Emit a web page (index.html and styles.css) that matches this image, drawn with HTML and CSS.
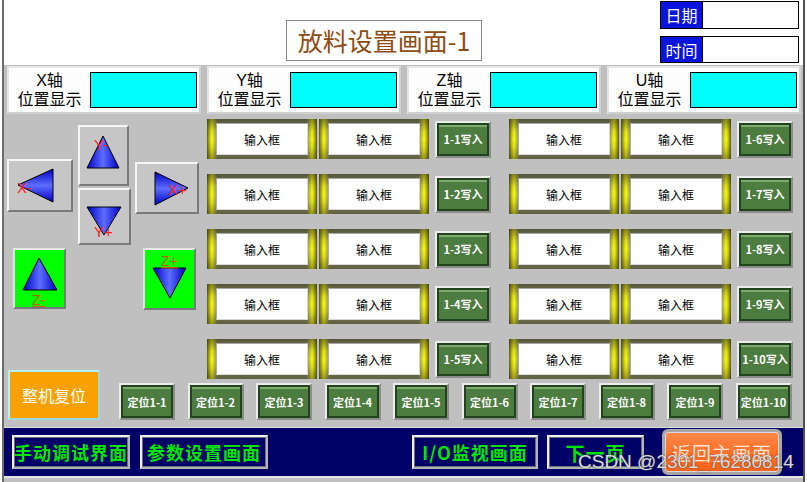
FILE: index.html
```html
<!DOCTYPE html>
<html lang="zh-CN">
<head>
<meta charset="utf-8">
<title>放料设置画面-1</title>
<link rel="stylesheet" href="styles.css">
</head>
<body>
<svg class="defs" aria-hidden="true">
  <defs>
    <linearGradient id="gv" x1="0" y1="0" x2="1" y2="0">
      <stop offset="0" stop-color="#0000c4"/>
      <stop offset="0.5" stop-color="#5d6dff"/>
      <stop offset="1" stop-color="#0000c4"/>
    </linearGradient>
    <linearGradient id="gh" x1="0" y1="0" x2="0" y2="1">
      <stop offset="0" stop-color="#0000c4"/>
      <stop offset="0.5" stop-color="#5d6dff"/>
      <stop offset="1" stop-color="#0000c4"/>
    </linearGradient>
  </defs>
</svg>
<div class="screen">
  <div class="frame">
    <header class="header">
      <div class="title">放料设置画面-1</div>
      <div class="clock">
        <div class="clock-row"><span class="clock-label">日期</span><span class="clock-field"></span></div>
        <div class="clock-row clock-row-2"><span class="clock-label">时间</span><span class="clock-field"></span></div>
      </div>
    </header>

    <section class="axes">
      <div class="axis"><div class="axis-label">X轴<br>位置显示</div><div class="axis-value"></div></div>
      <div class="axis"><div class="axis-label">Y轴<br>位置显示</div><div class="axis-value"></div></div>
      <div class="axis"><div class="axis-label">Z轴<br>位置显示</div><div class="axis-value"></div></div>
      <div class="axis"><div class="axis-label">U轴<br>位置显示</div><div class="axis-value"></div></div>
    </section>

    <main class="main">
      <div class="upper">
        <div class="jog">
          <div class="jbtn btn-ym">
            <svg width="47" height="57" viewBox="0 0 47 57">
              <polygon points="23,9 7,41 39,41" fill="url(#gv)" stroke="#000" stroke-width="1"/>
              <text x="14" y="23" class="jlabel">Y-</text>
            </svg>
          </div>
          <div class="jbtn btn-yp">
            <svg width="49" height="53" viewBox="0 0 49 53">
              <polygon points="7,17 41,17 24,45" fill="url(#gv)" stroke="#000" stroke-width="1"/>
              <text x="14" y="47" class="jlabel">Y+</text>
            </svg>
          </div>
          <div class="jbtn btn-xm">
            <svg width="62" height="49" viewBox="0 0 62 49">
              <polygon points="9,24 44,8 44,41" fill="url(#gh)" stroke="#000" stroke-width="1"/>
              <text x="8" y="32" class="jlabel">X-</text>
            </svg>
          </div>
          <div class="jbtn btn-xp">
            <svg width="60" height="48" viewBox="0 0 60 48">
              <polygon points="18,8 18,41 51,24" fill="url(#gh)" stroke="#000" stroke-width="1"/>
              <text x="31" y="31" class="jlabel">X+</text>
            </svg>
          </div>
          <div class="zbtn btn-zm">
            <svg width="49" height="57" viewBox="0 0 49 57">
              <polygon points="24,8 8,40 42,40" fill="url(#gv)" stroke="#000" stroke-width="1"/>
              <text x="17" y="55" class="zlabel">Z-</text>
            </svg>
          </div>
          <div class="zbtn btn-zp">
            <svg width="49" height="58" viewBox="0 0 49 58">
              <polygon points="8,18 41,18 25,48" fill="url(#gv)" stroke="#000" stroke-width="1"/>
              <text x="16" y="16" class="zlabel">Z+</text>
            </svg>
          </div>
        </div>

        <div class="inputs">
          <div class="row">
            <div class="group"><div class="field"><span>输入框</span></div><div class="field"><span>输入框</span></div><div class="gbtn write">1-1写入</div></div>
            <div class="group"><div class="field"><span>输入框</span></div><div class="field"><span>输入框</span></div><div class="gbtn write">1-6写入</div></div>
          </div>
          <div class="row">
            <div class="group"><div class="field"><span>输入框</span></div><div class="field"><span>输入框</span></div><div class="gbtn write">1-2写入</div></div>
            <div class="group"><div class="field"><span>输入框</span></div><div class="field"><span>输入框</span></div><div class="gbtn write">1-7写入</div></div>
          </div>
          <div class="row">
            <div class="group"><div class="field"><span>输入框</span></div><div class="field"><span>输入框</span></div><div class="gbtn write">1-3写入</div></div>
            <div class="group"><div class="field"><span>输入框</span></div><div class="field"><span>输入框</span></div><div class="gbtn write">1-8写入</div></div>
          </div>
          <div class="row">
            <div class="group"><div class="field"><span>输入框</span></div><div class="field"><span>输入框</span></div><div class="gbtn write">1-4写入</div></div>
            <div class="group"><div class="field"><span>输入框</span></div><div class="field"><span>输入框</span></div><div class="gbtn write">1-9写入</div></div>
          </div>
          <div class="row">
            <div class="group"><div class="field"><span>输入框</span></div><div class="field"><span>输入框</span></div><div class="gbtn write">1-5写入</div></div>
            <div class="group"><div class="field"><span>输入框</span></div><div class="field"><span>输入框</span></div><div class="gbtn write">1-10写入</div></div>
          </div>
        </div>
      </div>

      <div class="lower">
        <div class="reset">整机复位</div>
        <div class="positions">
          <div class="gbtn pos">定位1-1</div>
          <div class="gbtn pos">定位1-2</div>
          <div class="gbtn pos">定位1-3</div>
          <div class="gbtn pos">定位1-4</div>
          <div class="gbtn pos">定位1-5</div>
          <div class="gbtn pos">定位1-6</div>
          <div class="gbtn pos">定位1-7</div>
          <div class="gbtn pos">定位1-8</div>
          <div class="gbtn pos">定位1-9</div>
          <div class="gbtn pos">定位1-10</div>
        </div>
      </div>
    </main>

    <nav class="navbar">
      <div class="nav-btn nav-manual">手动调试界面</div>
      <div class="nav-btn nav-param">参数设置画面</div>
      <div class="nav-btn nav-io">I/O监视画面</div>
      <div class="nav-btn nav-next">下一页</div>
      <div class="nav-home">返回主画面</div>
    </nav>
    <div class="footer"></div>
  </div>
  <div class="watermark">CSDN @2301_76280814</div>
</div>
</body>
</html>
```

FILE: styles.css
```css
html, body {
  margin: 0;
  padding: 0;
  background: #ffffff;
}

.defs {
  display: block;
  width: 0;
  height: 0;
}

.screen {
  position: relative;
  width: 807px;
  height: 482px;
  overflow: hidden;
  background: #ffffff;
  font-family: "Liberation Sans", "Noto Sans CJK SC", sans-serif;
}

.frame {
  box-sizing: border-box;
  width: 803px;
  height: 482px;
  margin-left: 2px;
  border-left: 2px solid #6c6c6c;
  border-right: 2px solid #505050;
  display: flex;
  flex-direction: column;
}

/* ---------- header ---------- */
.header {
  height: 65px;
  flex: none;
  display: flex;
  background: #ffffff;
}

.title {
  box-sizing: border-box;
  width: 196px;
  height: 41px;
  margin-left: 282px;
  margin-top: 20px;
  border: 1px solid #8a8a8a;
  display: flex;
  align-items: center;
  justify-content: center;
  font-family: "Noto Sans CJK SC", sans-serif;
  font-size: 25px;
  line-height: 1;
  color: #8e4c12;
}

.clock {
  width: 139px;
  margin-left: 178px;
  margin-top: 1px;
  display: flex;
  flex-direction: column;
}

.clock-row {
  box-sizing: border-box;
  height: 28px;
  border: 1px solid #000;
  display: flex;
}

.clock-row-2 {
  margin-top: 7px;
  height: 27px;
}

.clock-label {
  width: 41px;
  background: #0814dc;
  color: #ffffff;
  font-family: "Noto Sans CJK SC", sans-serif;
  font-size: 16px;
  display: flex;
  align-items: center;
  justify-content: center;
}

.clock-field {
  flex: 1;
  background: #ffffff;
  border-left: 1px solid #000;
}

/* ---------- axis displays ---------- */
.axes {
  height: 50px;
  flex: none;
  background: #c0c0c0;
  display: flex;
  align-items: center;
  gap: 6px;
  padding-left: 3px;
}

.axis {
  box-sizing: border-box;
  width: 194px;
  height: 48px;
  border: 2px solid;
  border-color: #e4e4e4 #d0d0d0 #d0d0d0 #e4e4e4;
  background: #fdfdfd;
  display: flex;
  align-items: center;
  padding-right: 2px;
}

.axis-label {
  flex: 1;
  text-align: center;
  font-size: 16px;
  line-height: 19px;
  color: #000;
}

.axis-value {
  box-sizing: border-box;
  width: 107px;
  height: 36px;
  border: 1px solid #000;
  background: #00ffff;
}

/* ---------- main ---------- */
.main {
  height: 312px;
  flex: none;
  background: #c0c0c0;
  display: flex;
  flex-direction: column;
}

.upper {
  height: 255px;
  flex: none;
  display: flex;
}

.jog {
  width: 196px;
  flex: none;
  padding-top: 10px;
  display: grid;
  grid-template-columns: 72px 57px 67px;
  grid-template-rows: 61px 59px 65px;
  align-content: start;
}

.jbtn, .zbtn {
  box-sizing: border-box;
  border: 2px solid;
  border-color: #f6f6f6 #7a7a7a #7a7a7a #f6f6f6;
  background: #c6c6c6;
}

.zbtn {
  background: #00ff00;
  border-color: #e6e6e6 #7a7a7a #7a7a7a #e6e6e6;
}

.jbtn svg, .zbtn svg {
  display: block;
}

.jlabel {
  font-family: "Liberation Sans", sans-serif;
  font-size: 15px;
  fill: #ff1c1c;
}

.zlabel {
  font-family: "Liberation Sans", sans-serif;
  font-size: 14px;
  fill: #c85a00;
  text-decoration: underline;
}

.btn-ym { grid-column: 2; grid-row: 1; margin-left: 2px; width: 51px; height: 61px; }
.btn-yp { grid-column: 2; grid-row: 2; margin-left: 2px; margin-top: 2px; width: 53px; height: 57px; }
.btn-xm { grid-column: 1; grid-row: 1 / 3; align-self: center; margin-left: 3px; width: 66px; height: 53px; }
.btn-xp { grid-column: 3; grid-row: 1 / 3; align-self: center; margin-top: 6px; margin-left: 2px; width: 64px; height: 52px; }
.btn-zm { grid-column: 1; grid-row: 3; margin-top: 3px; margin-left: 9px; width: 53px; height: 61px; }
.btn-zp { grid-column: 3; grid-row: 3; margin-top: 3px; margin-left: 10px; width: 53px; height: 62px; }

.inputs {
  margin-left: 7px;
  padding-top: 4px;
  display: flex;
  flex-direction: column;
  gap: 15px;
}

.row {
  height: 40px;
  display: flex;
  align-items: center;
}

.group {
  display: flex;
  align-items: center;
}

.group + .group {
  margin-left: 18px;
}

.field {
  box-sizing: border-box;
  width: 110px;
  height: 40px;
  padding: 4px 9px;
  background:
    linear-gradient(to bottom, rgba(40,40,30,0.55) 0, rgba(40,40,30,0.1) 30%, rgba(0,0,0,0) 50%, rgba(40,40,30,0.1) 70%, rgba(40,40,30,0.45) 100%),
    linear-gradient(to right, #5a5a3c 0, #c8c800 2.5%, #ffff10 4.5%, #c0c040 7%, #8a8a60 9.5%, #8a8a60 90.5%, #c0c040 93%, #ffff10 95.5%, #c8c800 97.5%, #5a5a3c 100%);
}

.field + .field {
  margin-left: 2px;
}

.field span {
  box-sizing: border-box;
  display: flex;
  width: 100%;
  height: 100%;
  align-items: center;
  justify-content: center;
  background: #ffffff;
  border: 1px solid;
  border-color: #a8a8a8 #d8d8d8 #d8d8d8 #a8a8a8;
  font-family: "Noto Sans CJK SC", sans-serif;
  font-size: 12px;
  color: #000;
}

.gbtn {
  box-sizing: border-box;
  border: 2px solid;
  border-color: #ececec #8c8c8c #8c8c8c #ececec;
  background: #4d7c40;
  box-shadow: inset 0 0 0 2px #22441c, inset 0 4px 0 0 #7dab70;
  display: flex;
  align-items: center;
  justify-content: center;
  color: #ffffff;
  font-family: "Noto Sans CJK SC", sans-serif;
  font-weight: bold;
  font-size: 11px;
  white-space: nowrap;
}

.write {
  width: 56px;
  height: 37px;
  margin-left: 6px;
}

.lower {
  height: 50px;
  flex: none;
  display: flex;
  align-items: flex-end;
}

.reset {
  box-sizing: border-box;
  width: 92px;
  height: 50px;
  margin-left: 4px;
  border: 2px solid;
  border-color: #b8f0f4 #9cd8e0 #9cd8e0 #b8f0f4;
  background: #f9a100;
  color: #ffffff;
  font-family: "Noto Sans CJK SC", sans-serif;
  font-size: 16px;
  display: flex;
  align-items: center;
  justify-content: center;
}

.positions {
  margin-left: 19px;
  display: flex;
  gap: 12.5px;
}

.pos {
  width: 56px;
  height: 37px;
}

/* ---------- navigation bar ---------- */
.navbar {
  height: 48px;
  flex: none;
  background: #000066;
  border-top: 1px solid #dcdcdc;
  border-bottom: 2px solid #e6e6e6;
  display: flex;
  align-items: center;
}

.nav-btn {
  box-sizing: border-box;
  height: 34px;
  border: 2px solid;
  border-color: #f0f0f0 #b4b4b4 #b4b4b4 #f0f0f0;
  box-shadow: inset 0 0 0 1px #6c6c7c;
  background: #000066;
  color: #00e400;
  font-family: "Noto Sans CJK SC", sans-serif;
  font-weight: bold;
  font-size: 18px;
  letter-spacing: 1px;
  display: flex;
  align-items: center;
  justify-content: center;
  white-space: nowrap;
}

.nav-manual { margin-left: 8px; width: 118px; }
.nav-param { margin-left: 10px; width: 128px; }
.nav-io { margin-left: 144px; width: 126px; }
.nav-next { margin-left: 9px; width: 97px; font-size: 19px; }

.nav-home {
  box-sizing: border-box;
  margin-left: 18px;
  width: 120px;
  height: 46px;
  border: 3px solid #a6a6a6;
  border-radius: 6px;
  background: linear-gradient(to bottom, #ff8a4a, #ff6c24 60%, #f86418);
  box-shadow: inset 0 0 0 1px #d8d8d8;
  color: #ffe6da;
  font-family: "Noto Sans CJK SC", sans-serif;
  font-size: 19px;
  letter-spacing: 1px;
  display: flex;
  align-items: center;
  justify-content: center;
  white-space: nowrap;
}

.footer {
  flex: 1;
  background: #c0c0c0;
}

.watermark {
  position: absolute;
  left: 578px;
  top: 452px;
  font-family: "Liberation Sans", sans-serif;
  font-size: 19px;
  line-height: 19px;
  color: rgba(255, 255, 255, 0.82);
  text-shadow: 0 0 1px rgba(60, 60, 60, 0.9), 0 0 2px rgba(60, 60, 60, 0.6);
  white-space: nowrap;
}
```
